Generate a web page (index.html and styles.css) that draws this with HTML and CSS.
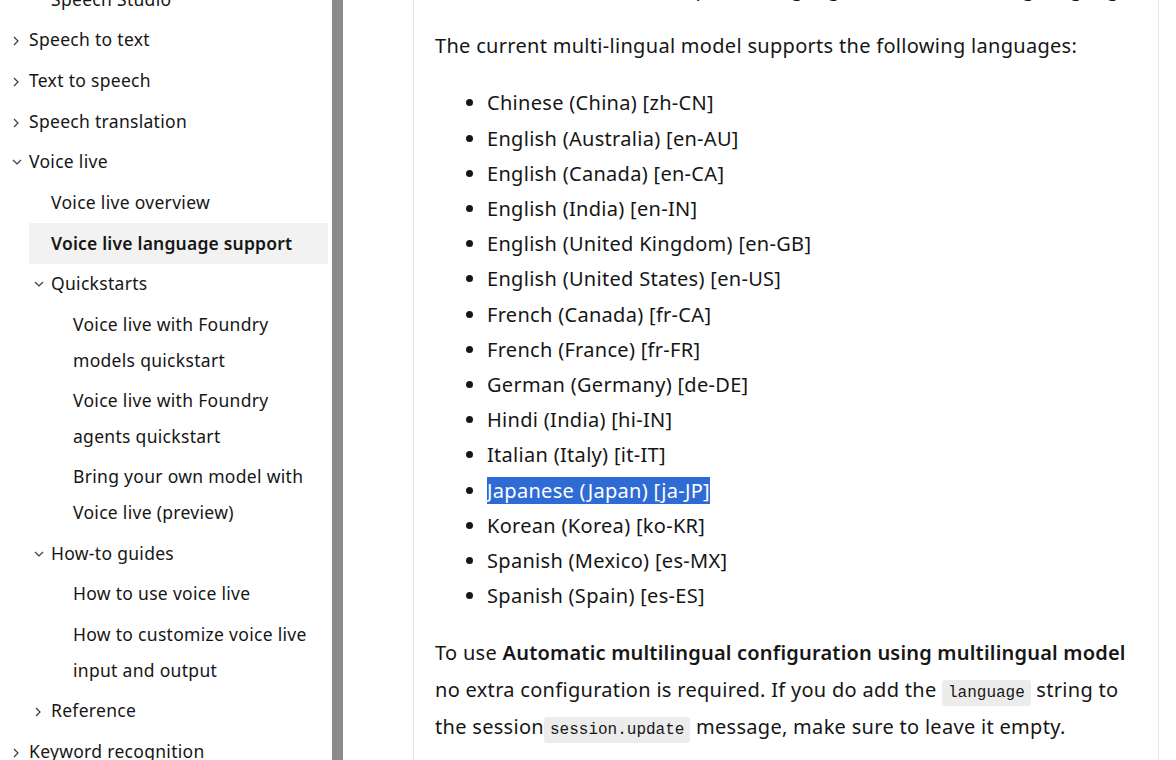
FILE: index.html
```html
<!DOCTYPE html>
<html>
<head>
  <title>Voice live language support</title>
  <link rel="stylesheet" href="styles.css">
</head>
<body>
  <div class="page">
    <nav class="toc">
      <ul class="toc-list">
        <li class="toc-row lvl2">Speech Studio</li>
        <li class="toc-row lvl1"><span class="chev"><svg width="8" height="10" viewBox="0 0 8 10"><polyline points="2,1 6,5 2,9" /></svg></span>Speech to text</li>
        <li class="toc-row lvl1"><span class="chev"><svg width="8" height="10" viewBox="0 0 8 10"><polyline points="2,1 6,5 2,9" /></svg></span>Text to speech</li>
        <li class="toc-row lvl1"><span class="chev"><svg width="8" height="10" viewBox="0 0 8 10"><polyline points="2,1 6,5 2,9" /></svg></span>Speech translation</li>
        <li class="toc-row lvl1"><span class="chev down"><svg width="10" height="8" viewBox="0 0 10 8"><polyline points="1,2 5,6 9,2" /></svg></span>Voice live</li>
        <li class="toc-row lvl2">Voice live overview</li>
        <li class="toc-row lvl2 active">Voice live language support</li>
        <li class="toc-row lvl2b"><span class="chev down"><svg width="10" height="8" viewBox="0 0 10 8"><polyline points="1,2 5,6 9,2" /></svg></span>Quickstarts</li>
        <li class="toc-row lvl3">Voice live with Foundry<br>models quickstart</li>
        <li class="toc-row lvl3">Voice live with Foundry<br>agents quickstart</li>
        <li class="toc-row lvl3">Bring your own model with<br>Voice live (preview)</li>
        <li class="toc-row lvl2b"><span class="chev down"><svg width="10" height="8" viewBox="0 0 10 8"><polyline points="1,2 5,6 9,2" /></svg></span>How-to guides</li>
        <li class="toc-row lvl3">How to use voice live</li>
        <li class="toc-row lvl3">How to customize voice live<br>input and output</li>
        <li class="toc-row lvl2b"><span class="chev"><svg width="8" height="10" viewBox="0 0 8 10"><polyline points="2,1 6,5 2,9" /></svg></span>Reference</li>
        <li class="toc-row lvl1"><span class="chev"><svg width="8" height="10" viewBox="0 0 8 10"><polyline points="2,1 6,5 2,9" /></svg></span>Keyword recognition</li>
      </ul>
    </nav>
    <div class="scrollbar"></div>
    <div class="gutter"></div>

    <main class="content">
      <p class="lead">The model can detect the spoken language and switch among languages in a single session.</p>
      <p>The current multi-lingual model supports the following languages:</p>
      <ul class="langs">
        <li>Chinese (China) [zh-CN]</li>
        <li>English (Australia) [en-AU]</li>
        <li>English (Canada) [en-CA]</li>
        <li>English (India) [en-IN]</li>
        <li>English (United Kingdom) [en-GB]</li>
        <li>English (United States) [en-US]</li>
        <li>French (Canada) [fr-CA]</li>
        <li>French (France) [fr-FR]</li>
        <li>German (Germany) [de-DE]</li>
        <li>Hindi (India) [hi-IN]</li>
        <li>Italian (Italy) [it-IT]</li>
        <li><span class="selected">Japanese (Japan) [ja-JP]</span></li>
        <li>Korean (Korea) [ko-KR]</li>
        <li>Spanish (Mexico) [es-MX]</li>
        <li>Spanish (Spain) [es-ES]</li>
      </ul>
      <p class="note">To use <strong>Automatic multilingual configuration using multilingual model</strong> no extra configuration is required. If you do add the <code>language</code> string to the session<code>session.update</code> message, make sure to leave it empty.</p>
    </main>
  </div>
</body>
</html>
```

FILE: styles.css
```css
html, body {
  margin: 0;
  height: 100%;
  overflow: hidden;
  background: #fff;
}

body {
  font-family: "Noto Sans", "Open Sans", sans-serif;
  color: #161616;
}

.page {
  display: flex;
  height: 760px;
}

/* left table of contents */
.toc {
  width: 332px;
  flex-shrink: 0;
  overflow: hidden;
}

.toc-list {
  list-style: none;
  margin: -21px 0 0 0;
  padding: 0;
}

.toc-row {
  font-size: 17.5px;
  letter-spacing: 0.3px;
  line-height: 35.5px;
  padding: 2.6px 0;
  margin-right: 4px;
  white-space: nowrap;
}

.toc-row.lvl1 { padding-left: 12px; }
.toc-row.lvl2 { margin-left: 29px; padding-left: 22px; }
.toc-row.lvl2b { padding-left: 34px; }
.toc-row.lvl3 { padding-left: 73px; }

.toc-row.active {
  background: #f2f2f2;
  font-weight: 600;
  letter-spacing: 0.2px;
}

.chev {
  display: inline-block;
  width: 17px;
  height: 10px;
  vertical-align: 0;
}

.chev.down {
  height: 8px;
  vertical-align: 2px;
}

.chev svg {
  display: block;
  fill: none;
  stroke: #3b3b3b;
  stroke-width: 1.2;
}

.scrollbar {
  width: 11px;
  flex-shrink: 0;
  background: #8b8b8b;
}

.gutter {
  width: 70px;
  flex-shrink: 0;
}

/* article body */
.content {
  width: 723px;
  flex-shrink: 0;
  border-left: 1px solid #e5e5e5;
  border-right: 1px solid #e5e5e5;
  padding-left: 21px;
  font-size: 20px;
  letter-spacing: 0.3px;
  overflow: hidden;
}

.content p {
  margin: 0 0 21.4px 0;
  line-height: 36px;
}

.content p.lead {
  margin-top: -29px;
  margin-bottom: 21px;
  white-space: nowrap;
}

.langs {
  margin: 0 0 21px 0;
  padding-left: 52px;
}

.langs li {
  line-height: 35.2px;
}

.selected {
  background: #2f6bd4;
  color: #fff;
}

.content p.note {
  line-height: 37px;
  padding-right: 20px;
}

strong {
  font-weight: 600;
  letter-spacing: 0.2px;
}

code {
  font-family: "Liberation Mono", "DejaVu Sans Mono", monospace;
  font-size: 16px;
  letter-spacing: 0;
  line-height: 1;
  background: #ececec;
  border-radius: 3px;
  padding: 4px 6px;
}
```
